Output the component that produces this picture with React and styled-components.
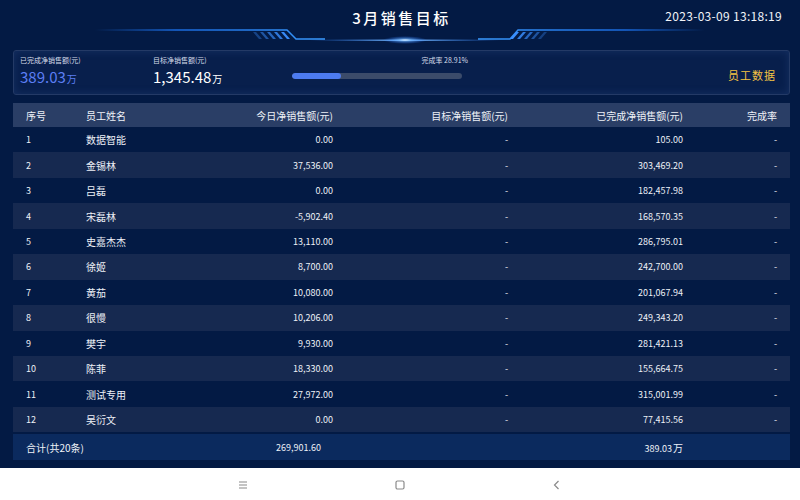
import React from 'react';
import styled, { createGlobalStyle } from 'styled-components';

const GlobalStyle = createGlobalStyle`
  html, body {
    margin: 0;
    padding: 0;
    background: #ffffff;
  }
  body {
    font-family: "Noto Sans CJK SC", "Noto Sans", sans-serif;
  }
`;

const Page = styled.div`
  width: 800px;
  height: 500px;
  display: flex;
  flex-direction: column;
  overflow: hidden;
`;

const Screen = styled.div`
  height: 468px;
  background: #031a44;
  display: flex;
  flex-direction: column;
  padding: 0 10px 0 13px;
  box-sizing: border-box;
`;

const Header = styled.header`
  position: relative;
  height: 50px;
  display: grid;
  grid-template-columns: 1fr auto 1fr;
  align-items: start;
`;

const Decor = styled.svg`
  position: absolute;
  left: -13px;
  top: 0;
  width: 800px;
  height: 50px;
  pointer-events: none;
`;

const Title = styled.h1`
  grid-column: 2;
  margin: 8px 0 0;
  font-size: 15px;
  line-height: 20px;
  font-weight: 500;
  color: #ffffff;
  letter-spacing: 2.5px;
  position: relative;
`;

const Clock = styled.div`
  grid-column: 3;
  justify-self: end;
  margin: 8px 8px 0 0;
  font-size: 12px;
  line-height: 16px;
  color: #f2f4f8;
  letter-spacing: 0.3px;
  position: relative;
`;

const Summary = styled.section`
  height: 45px;
  box-sizing: border-box;
  border: 1px solid #243a66;
  border-radius: 3px;
  background: #081f4c;
  box-shadow: inset 0 0 8px rgba(60, 100, 170, 0.25);
  display: flex;
  align-items: flex-start;
  padding: 5px 13px 0 6px;
`;

const Stat = styled.div`
  width: ${p => p.width}px;
  display: flex;
  flex-direction: column;
  gap: 3px;
`;

const Tiny = styled.div`
  font-size: 7px;
  line-height: 8px;
  color: #d8deea;
  white-space: nowrap;
`;

const Big = styled.div`
  font-size: 15px;
  line-height: 20px;
  color: ${p => p.color};
  white-space: nowrap;
`;

const Unit = styled.span`
  font-size: 10px;
  margin-left: 1px;
`;

const Progress = styled.div`
  width: 176px;
  display: flex;
  flex-direction: column;
  align-items: stretch;
  gap: 9px;
`;

const ProgressLabel = styled(Tiny)`
  text-align: right;
`;

const Track = styled.div`
  width: 170px;
  height: 6px;
  border-radius: 3px;
  background: #3b4b6a;
  overflow: hidden;
`;

const Fill = styled.div`
  height: 100%;
  border-radius: 3px;
  background: #4d7bef;
`;

const StaffLink = styled.div`
  margin-left: auto;
  margin-top: 12px;
  font-size: 11px;
  line-height: 14px;
  color: #f5c443;
  letter-spacing: 1px;
`;

const Table = styled.div`
  margin-top: 8px;
  width: 777px;
  display: flex;
  flex-direction: column;
`;

const Row = styled.div`
  display: grid;
  grid-template-columns: 60px 100px 173px 175px 175px 94px;
  height: ${p => p.h || 25.45}px;
  align-items: center;
  background: ${p => p.bg || 'transparent'};
  font-size: 10px;
  color: #eef1f7;
`;

const Cell = styled.div`
  padding: 0 ${p => p.pr ?? 13}px 0 13px;
  text-align: ${p => (p.right ? 'right' : 'left')};
  font-size: ${p => (p.num ? '9px' : 'inherit')};
  white-space: nowrap;
`;

const Total = styled(Row)`
  margin-top: 2px;
`;

const Nav = styled.nav`
  flex: 1;
  background: #ffffff;
  display: flex;
  align-items: center;
  justify-content: center;
  gap: 145px;
  padding-top: 2px;
`;

const NavBtn = styled.svg`
  width: 12px;
  height: 12px;
`;

const rows = [
  ['1', '数据智能', '0.00', '-', '105.00', '-'],
  ['2', '金锡林', '37,536.00', '-', '303,469.20', '-'],
  ['3', '吕磊', '0.00', '-', '182,457.98', '-'],
  ['4', '宋磊林', '-5,902.40', '-', '168,570.35', '-'],
  ['5', '史嘉杰杰', '13,110.00', '-', '286,795.01', '-'],
  ['6', '徐姬', '8,700.00', '-', '242,700.00', '-'],
  ['7', '黄茄', '10,080.00', '-', '201,067.94', '-'],
  ['8', '很慢', '10,206.00', '-', '249,343.20', '-'],
  ['9', '樊宇', '9,930.00', '-', '281,421.13', '-'],
  ['10', '陈菲', '18,330.00', '-', '155,664.75', '-'],
  ['11', '测试专用', '27,972.00', '-', '315,001.99', '-'],
  ['12', '吴衍文', '0.00', '-', '77,415.56', '-'],
];

function HeaderDecor() {
  return (
    <Decor viewBox="0 0 800 50">
      <defs>
        <linearGradient id="lineL" x1="0" x2="1" y1="0" y2="0">
          <stop offset="0" stopColor="#1e7bff" stopOpacity="0" />
          <stop offset="0.35" stopColor="#1e7bff" stopOpacity="0.8" />
          <stop offset="1" stopColor="#3a9bff" />
        </linearGradient>
        <linearGradient id="lineR" x1="1" x2="0" y1="0" y2="0">
          <stop offset="0" stopColor="#1e7bff" stopOpacity="0" />
          <stop offset="0.35" stopColor="#1e7bff" stopOpacity="0.8" />
          <stop offset="1" stopColor="#3a9bff" />
        </linearGradient>
        <linearGradient id="mid" x1="0" x2="1" y1="0" y2="0">
          <stop offset="0" stopColor="#2a7dff" stopOpacity="0" />
          <stop offset="0.5" stopColor="#7fc0ff" />
          <stop offset="1" stopColor="#2a7dff" stopOpacity="0" />
        </linearGradient>
        <radialGradient id="glow">
          <stop offset="0" stopColor="#e8f4ff" />
          <stop offset="0.3" stopColor="#6fb4ff" stopOpacity="0.7" />
          <stop offset="1" stopColor="#1e6fff" stopOpacity="0" />
        </radialGradient>
      </defs>
      <path d="M95 30 H287 L296 39 H325" fill="none" stroke="url(#lineL)" strokeWidth="1.5" />
      <path d="M705 30 H518 L510 39 H478" fill="none" stroke="url(#lineR)" strokeWidth="1.5" />
      {[0, 1, 2, 3, 4].map(i => (
        <path
          key={'l' + i}
          d={`M${253 + i * 7} 32 h3 l6 7 h-3 z`}
          fill="#3b8fff"
          opacity={0.35 + i * 0.15}
        />
      ))}
      {[0, 1, 2, 3, 4].map(i => (
        <path
          key={'r' + i}
          d={`M${516 + i * 7} 32 h3 l-6 7 h-3 z`}
          fill="#3b8fff"
          opacity={1 - i * 0.17}
        />
      ))}
      <rect x="310" y="39.5" width="190" height="1.5" fill="url(#mid)" />
      <ellipse cx="405" cy="40" rx="22" ry="4" fill="url(#glow)" />
    </Decor>
  );
}

export default function App() {
  return (
    <Page>
      <GlobalStyle />
      <Screen>
        <Header>
          <HeaderDecor />
          <Title>3月销售目标</Title>
          <Clock>2023-03-09 13:18:19</Clock>
        </Header>

        <Summary>
          <Stat width={133}>
            <Tiny>已完成净销售额(元)</Tiny>
            <Big color="#5b7ef4">
              389.03<Unit>万</Unit>
            </Big>
          </Stat>
          <Stat width={139}>
            <Tiny>目标净销售额(元)</Tiny>
            <Big color="#ffffff">
              1,345.48<Unit>万</Unit>
            </Big>
          </Stat>
          <Progress>
            <ProgressLabel>完成率 28.91%</ProgressLabel>
            <Track>
              <Fill style={{ width: '28.91%' }} />
            </Track>
          </Progress>
          <StaffLink>员工数据</StaffLink>
        </Summary>

        <Table>
          <Row bg="#2a3e66" h={24}>
            <Cell>序号</Cell>
            <Cell>员工姓名</Cell>
            <Cell right>今日净销售额(元)</Cell>
            <Cell right>目标净销售额(元)</Cell>
            <Cell right>已完成净销售额(元)</Cell>
            <Cell right>完成率</Cell>
          </Row>
          {rows.map((r, i) => (
            <Row key={r[0]} bg={i % 2 ? '#162950' : 'transparent'}>
              <Cell num>{r[0]}</Cell>
              <Cell>{r[1]}</Cell>
              <Cell right num>{r[2]}</Cell>
              <Cell right num>{r[3]}</Cell>
              <Cell right num>{r[4]}</Cell>
              <Cell right num>{r[5]}</Cell>
            </Row>
          ))}
          <Total bg="#0b2a5e" h={26}>
            <Cell>合计(共20条)</Cell>
            <Cell />
            <Cell right num pr={25}>269,901.60</Cell>
            <Cell />
            <Cell right num>
              389.03<Unit>万</Unit>
            </Cell>
            <Cell />
          </Total>
        </Table>
      </Screen>

      <Nav>
        <NavBtn viewBox="0 0 12 12">
          <path d="M2 3h8M2 6h8M2 9h8" stroke="#8a8a8a" strokeWidth="1.2" />
        </NavBtn>
        <NavBtn viewBox="0 0 12 12">
          <rect x="2" y="2" width="8" height="8" rx="1.5" fill="none" stroke="#8a8a8a" strokeWidth="1.2" />
        </NavBtn>
        <NavBtn viewBox="0 0 12 12">
          <path d="M7.5 2 L3.5 6 L7.5 10" fill="none" stroke="#8a8a8a" strokeWidth="1.2" />
        </NavBtn>
      </Nav>
    </Page>
  );
}
